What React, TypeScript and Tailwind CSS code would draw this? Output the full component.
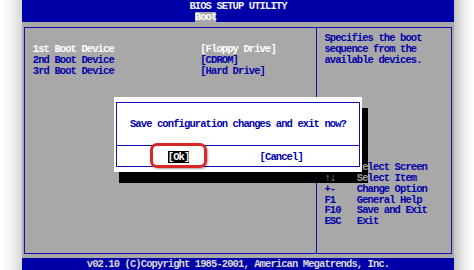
import React from "react";

const BLUE = "text-[#0000a8]";

function Row({ children, className = "" }: { children?: React.ReactNode; className?: string }) {
  return <div className={`flex h-[10.75px] pt-[1px] whitespace-pre ${className}`}>{children}</div>;
}

const UNDER = "relative z-20 text-[#9c9c9c]";

export default function App() {
  return (
    <div className="relative w-[474px] h-[270px] overflow-hidden bg-white flex font-['Liberation_Mono',monospace] font-bold text-[10.5px] leading-[10.75px] tracking-[-0.9px]">
      {/* left shadow */}
      <div className="w-[22px] h-full bg-linear-to-r from-white via-[#f4f4f4] to-[#d6d6d6]" />
      {/* screen */}
      <div className="relative w-[432px] h-full flex flex-col bg-[#a8a8a8]">
        {/* header */}
        <div className="h-[21.5px] bg-[#0000a8] flex flex-col text-[#f0f0f0]">
          <Row className="justify-center">BIOS SETUP UTILITY</Row>
          <Row className="pl-[172.8px]">
            <span className="bg-[#a8a8a8] text-white">Boot</span>
          </Row>
        </div>
        {/* body */}
        <div className="h-[236.5px] pt-[5px] px-[2px] pb-[4.5px]">
          <div className="h-full border border-[#1010b0] flex">
            <div className="w-[292px] h-full border-r border-[#1010b0] pt-[15.5px] pl-[7.8px] flex flex-col">
              <Row className="text-white">
                <span className="w-[167.4px]">1st Boot Device</span>
                <span>[Floppy Drive]</span>
              </Row>
              <Row className={BLUE}>
                <span className="w-[167.4px]">2nd Boot Device</span>
                <span>[CDROM]</span>
              </Row>
              <Row className={BLUE}>
                <span className="w-[167.4px]">3rd Boot Device</span>
                <span>[Hard Drive]</span>
              </Row>
            </div>
            <div className={`flex-1 h-full pt-[4.75px] pl-[7.4px] flex flex-col ${BLUE}`}>
              <Row>Specifies the boot</Row>
              <Row>sequence from the</Row>
              <Row>available devices.</Row>
              <div className="mt-[96.75px] flex flex-col">
                <Row>
                  <span className="w-[32.4px]">→←</span>
                  <span>S</span>
                  <span className={UNDER}>e</span>
                  <span>lect Screen</span>
                </Row>
                <Row>
                  <span className={`w-[32.4px] ${UNDER}`}>↑↓</span>
                  <span className={UNDER}>Se</span>
                  <span>lect Item</span>
                </Row>
                <Row><span className="w-[32.4px]">+-</span><span>Change Option</span></Row>
                <Row><span className="w-[32.4px]">F1</span><span>General Help</span></Row>
                <Row><span className="w-[32.4px]">F10</span><span>Save and Exit</span></Row>
                <Row><span className="w-[32.4px]">ESC</span><span>Exit</span></Row>
              </div>
            </div>
          </div>
        </div>
        {/* footer */}
        <div className="h-[12px] bg-[#0000a8] text-[#d8d8d8]">
          <Row className="justify-center">v02.10 (C)Copyright 1985-2001, American Megatrends, Inc.</Row>
        </div>

        {/* dialog shadow */}
        <div className="absolute z-10 left-[97.2px] top-[107.5px] w-[248.4px] h-[75.25px] bg-black" />
        {/* dialog */}
        <div className="absolute z-30 left-[91.8px] top-[96.75px] w-[248.4px] h-[75.25px] bg-white px-[2px] py-[5px]">
          <div className="h-full border border-[#1010b0] flex flex-col">
            <div className={`h-[43px] border-b border-[#1010b0] pt-[15.5px] ${BLUE}`}>
              <Row className="justify-center">Save configuration changes and exit now?</Row>
            </div>
            <div className={`pt-[4.75px] pl-[51px] ${BLUE}`}>
              <Row>
                <span className="w-[91.8px]">
                  <span className="bg-black text-white">[Ok]</span>
                </span>
                <span>[Cancel]</span>
              </Row>
            </div>
          </div>
        </div>
      </div>
      {/* right shadow */}
      <div className="w-[20px] h-full bg-linear-to-r from-[#c4c4c4] via-[#ececec] to-white" />

      {/* red annotation */}
      <div className="absolute z-40 left-[150px] top-[143px] w-[57px] h-[25px] border-[3px] border-[#d92626] rounded-[7px] shadow-[1px_1px_2px_rgba(0,0,0,0.35)]" />
    </div>
  );
}
